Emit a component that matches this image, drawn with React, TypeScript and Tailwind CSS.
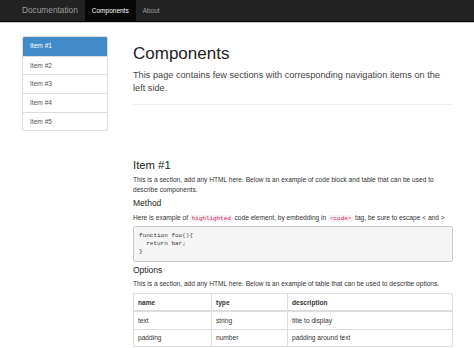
import React from "react";

const items = ["Item #1", "Item #2", "Item #3", "Item #4", "Item #5"];

export default function App() {
  return (
    <div
      className="w-[474px] h-[348px] overflow-hidden bg-white text-[#333]"
      style={{ fontFamily: '"Liberation Sans", Arial, sans-serif' }}
    >
      {/* Navbar */}
      <div className="h-[22px] bg-[#222] border-b border-[#080808] flex items-stretch px-[22px]">
        <div className="flex items-center text-[8.3px] text-[#9d9d9d] pr-[7px]">Documentation</div>
        <div className="flex items-center bg-[#080808] text-white text-[6.5px] px-[7px]">Components</div>
        <div className="flex items-center text-[#9d9d9d] text-[6.5px] px-[7px]">About</div>
      </div>
      <div className="h-px bg-[#c8c8c8]" />

      {/* Container */}
      <div className="flex px-[22px] pt-[13px] gap-[25px]">
        {/* Sidebar */}
        <div className="w-[86px] shrink-0">
          <div className="rounded-[2px] border border-[#ddd] overflow-hidden">
            {items.map((it, i) => (
              <div
                key={it}
                className={
                  "h-[18.7px] flex items-center pl-[7px] text-[6.6px] " +
                  (i === 0
                    ? "bg-[#428bca] text-white -m-px mb-0 pl-[8px] h-[19.7px]"
                    : "text-[#555] border-t border-[#ddd]")
                }
              >
                {it}
              </div>
            ))}
          </div>
        </div>

        {/* Content */}
        <div className="w-[320px] shrink-0">
          <div className="border-b border-[#eee] pb-[4px]">
            <h1 className="text-[17px] leading-[19px] mt-[8px] mb-[6px] text-[#222]">Components</h1>
            <p className="text-[9.2px] leading-[12.5px] font-light text-[#444]">
              This page contains few sections with corresponding navigation items on the left side.
            </p>
            <div className="h-[6px]" />
          </div>

          <h3 className="text-[11.3px] leading-[12.4px] mt-[54px] text-[#222]">Item #1</h3>
          <p className="text-[6.6px] leading-[9.4px] mt-[4px]">
            This is a section, add any HTML here. Below is an example of code block and table that can be used to
            describe components.
          </p>
          <h4 className="text-[8.5px] leading-[9.4px] mt-[5px] text-[#222]">Method</h4>
          <p className="text-[6.6px] leading-[9.4px] mt-[4px]">
            Here is example of{" "}
            <code
              className="text-[5.9px] text-[#c7254e] bg-[#f9f2f4] px-[2px] rounded-[2px]"
              style={{ fontFamily: '"Liberation Mono", monospace' }}
            >
              highlighted
            </code>{" "}
            code element, by embedding in{" "}
            <code
              className="text-[5.9px] text-[#c7254e] bg-[#f9f2f4] px-[2px] rounded-[2px]"
              style={{ fontFamily: '"Liberation Mono", monospace' }}
            >
              {"<code>"}
            </code>{" "}
            tag, be sure to escape {"<"} and {">"}
          </p>
          <pre
            className="mt-[3px] bg-[#f5f5f5] border border-[#ccc] rounded-[2px] px-[5px] py-[4.5px] text-[6px] leading-[8.3px] text-[#333]"
            style={{ fontFamily: '"Liberation Mono", monospace' }}
          >
{`function foo(){
  return bar;
}`}
          </pre>
          <h4 className="text-[8.5px] leading-[9.4px] mt-[4px] text-[#222]">Options</h4>
          <p className="text-[6.6px] leading-[9.4px] mt-[3.5px]">
            This is a section, add any HTML here. Below is an example of table that can be used to describe options.
          </p>
          <table className="mt-[5px] w-full border-collapse border border-[#ddd] text-[6.6px] leading-[9.4px]">
            <thead>
              <tr>
                <th className="text-left font-bold border border-[#ddd] border-b-2 px-[4px] py-[3.3px] w-[78px]">name</th>
                <th className="text-left font-bold border border-[#ddd] border-b-2 px-[4px] py-[3.3px] w-[76px]">type</th>
                <th className="text-left font-bold border border-[#ddd] border-b-2 px-[4px] py-[3.3px]">description</th>
              </tr>
            </thead>
            <tbody>
              <tr>
                <td className="border border-[#ddd] px-[4px] py-[3.6px]">text</td>
                <td className="border border-[#ddd] px-[4px] py-[3.6px]">string</td>
                <td className="border border-[#ddd] px-[4px] py-[3.6px]">title to display</td>
              </tr>
              <tr>
                <td className="border border-[#ddd] px-[4px] py-[3.6px]">padding</td>
                <td className="border border-[#ddd] px-[4px] py-[3.6px]">number</td>
                <td className="border border-[#ddd] px-[4px] py-[3.6px]">padding around text</td>
              </tr>
            </tbody>
          </table>
        </div>
      </div>
    </div>
  );
}
